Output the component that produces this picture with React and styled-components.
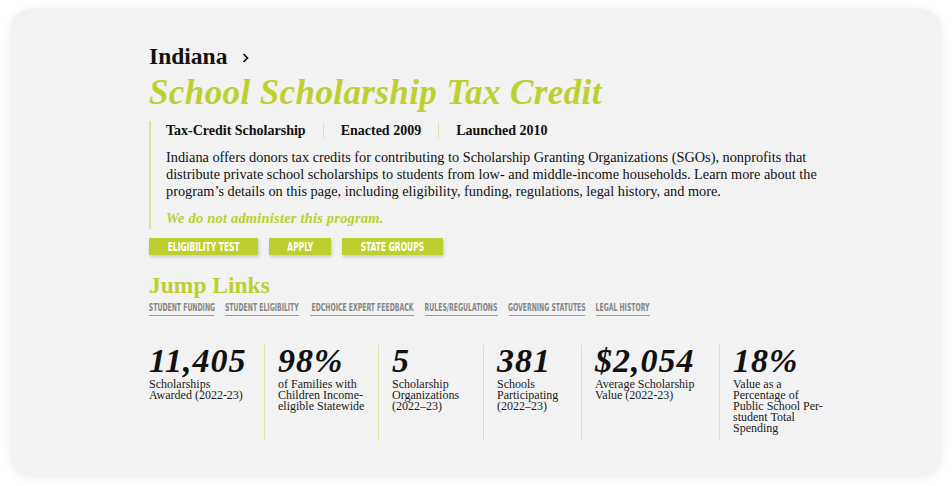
import React from "react";
import styled, { createGlobalStyle } from "styled-components";

const GREEN = "#bdd02f";
const SERIF = `"Liberation Serif", "Times New Roman", serif`;
const CONDENSED = `"DejaVu Sans Condensed", "DejaVu Sans", sans-serif`;

const Global = createGlobalStyle`
	html, body {
		margin: 0;
		background: #ffffff;
	}
	* {
		box-sizing: border-box;
	}
`;

const Card = styled.div`
	margin: 8px 10px;
	height: 468px;
	border-radius: 24px;
	background: #f2f2f2;
	box-shadow: 0 2px 10px rgba(0, 0, 0, 0.08);
	padding: 35px 0 0 139px;
	font-family: ${SERIF};
	color: #111;
`;

const Breadcrumb = styled.div`
	display: flex;
	align-items: center;
	gap: 14px;
	font-size: 23.5px;
	font-weight: 700;
	line-height: 26px;
`;

const Chevron = styled.svg`
	width: 9px;
	height: 12px;
	margin-top: 4px;
`;

const Title = styled.h1`
	margin: 5px 0 0;
	font-size: 35px;
	line-height: 38px;
	letter-spacing: 0.4px;
	font-style: italic;
	font-weight: 700;
	color: ${GREEN};
`;

const Intro = styled.div`
	margin-top: 9px;
	border-left: 2px solid #dbe3a6;
	padding-left: 15px;
	padding-bottom: 2px;
`;

const Meta = styled.div`
	display: flex;
	align-items: center;
	height: 20px;
	font-size: 14px;
	font-weight: 700;
`;

const MetaItem = styled.span`
	padding: 0 17px;
	line-height: 16px;
	border-left: ${(p) => (p.$first ? "none" : "1px solid #dbe3a6")};
	&:first-child {
		padding-left: 0;
	}
`;

const Description = styled.p`
	margin: 8px 0 0;
	width: 660px;
	font-size: 14.3px;
	line-height: 17px;
`;

const Note = styled.p`
	margin: 10px 0 0;
	font-size: 14.5px;
	letter-spacing: 0.2px;
	font-weight: 700;
	font-style: italic;
	color: ${GREEN};
`;

const Buttons = styled.div`
	display: flex;
	gap: 11px;
	margin-top: 9px;
`;

const Button = styled.button`
	display: flex;
	align-items: center;
	justify-content: center;
	width: ${(p) => p.$w}px;
	height: 17px;
	padding: 0;
	border: none;
	background: ${GREEN};
	color: #fff;
	box-shadow: 1px 2px 3px rgba(0, 0, 0, 0.16);
	cursor: pointer;
`;

const Caps = styled.span`
	display: inline-block;
	white-space: nowrap;
	font-family: ${CONDENSED};
	font-weight: 700;
	font-size: ${(p) => p.$size}px;
	transform: scaleX(${(p) => p.$sx});
`;

const JumpTitle = styled.h2`
	margin: 17px 0 0;
	font-size: 23.5px;
	line-height: 26px;
	font-weight: 700;
	color: ${GREEN};
`;

const JumpLinks = styled.div`
	display: flex;
	gap: 11px;
	margin-top: 3px;
`;

const JumpLink = styled.a`
	display: flex;
	justify-content: center;
	width: ${(p) => p.$w}px;
	line-height: 13px;
	color: #878787;
	text-decoration: none;
	border-bottom: 1px solid #9a9a9a;
	padding-bottom: 1px;
`;

const Stats = styled.div`
	display: flex;
	margin-top: 29px;
`;

const Stat = styled.div`
	width: ${(p) => p.$w}px;
	height: 96px;
	padding-left: 13px;
	border-left: 1px solid #dbe3a6;
	&:first-child {
		border-left: none;
		padding-left: 0;
	}
`;

const Figure = styled.div`
	font-size: 34px;
	line-height: 32px;
	font-weight: 700;
	font-style: italic;
	letter-spacing: 1px;
`;

const Label = styled.div`
	width: ${(p) => p.$w}px;
	margin-top: 2px;
	font-size: 12px;
	line-height: 11px;
	color: #1a1a1a;
`;

const meta = ["Tax-Credit Scholarship", "Enacted 2009", "Launched 2010"];

const buttons = [
	{ text: "ELIGIBILITY TEST", w: 109 },
	{ text: "APPLY", w: 62 },
	{ text: "STATE GROUPS", w: 101 },
];

const links = [
	{ text: "STUDENT FUNDING", w: 65 },
	{ text: "STUDENT ELIGIBILITY", w: 74 },
	{ text: "EDCHOICE EXPERT FEEDBACK", w: 104 },
	{ text: "RULES/REGULATIONS", w: 73 },
	{ text: "GOVERNING STATUTES", w: 76 },
	{ text: "LEGAL HISTORY", w: 54 },
];

const stats = [
	{ n: "11,405", label: "Scholarships Awarded (2022-23)", w: 115, lw: 100 },
	{ n: "98%", label: "of Families with Children Income-eligible Statewide", w: 114, lw: 94 },
	{ n: "5", label: "Scholarship Organizations (2022–23)", w: 105, lw: 90 },
	{ n: "381", label: "Schools Participating (2022–23)", w: 98, lw: 84 },
	{ n: "$2,054", label: "Average Scholarship Value (2022-23)", w: 138, lw: 114 },
	{ n: "18%", label: "Value as a Percentage of Public School Per-student Total Spending", w: 115, lw: 92 },
];

export default function App() {
	return (
		<>
			<Global />
			<Card>
				<Breadcrumb>
					Indiana
					<Chevron viewBox="0 0 9 12">
						<path d="M2.5 2 L6.5 6 L2.5 10" fill="none" stroke="#111" strokeWidth="1.7" />
					</Chevron>
				</Breadcrumb>
				<Title>School Scholarship Tax Credit</Title>
				<Intro>
					<Meta>
						{meta.map((m, i) => (
							<MetaItem key={m} $first={i === 0}>
								{m}
							</MetaItem>
						))}
					</Meta>
					<Description>
						Indiana offers donors tax credits for contributing to Scholarship Granting
						Organizations (SGOs), nonprofits that distribute private school scholarships to
						students from low- and middle-income households. Learn more about the program’s
						details on this page, including eligibility, funding, regulations, legal history,
						and more.
					</Description>
					<Note>We do not administer this program.</Note>
				</Intro>
				<Buttons>
					{buttons.map((b) => (
						<Button key={b.text} $w={b.w}>
							<Caps $size={12.5} $sx={0.67}>
								{b.text}
							</Caps>
						</Button>
					))}
				</Buttons>
				<JumpTitle>Jump Links</JumpTitle>
				<JumpLinks>
					{links.map((l) => (
						<JumpLink key={l.text} href="#" $w={l.w}>
							<Caps $size={10.5} $sx={0.65}>
								{l.text}
							</Caps>
						</JumpLink>
					))}
				</JumpLinks>
				<Stats>
					{stats.map((s) => (
						<Stat key={s.n} $w={s.w}>
							<Figure>{s.n}</Figure>
							<Label $w={s.lw}>{s.label}</Label>
						</Stat>
					))}
				</Stats>
			</Card>
		</>
	);
}
